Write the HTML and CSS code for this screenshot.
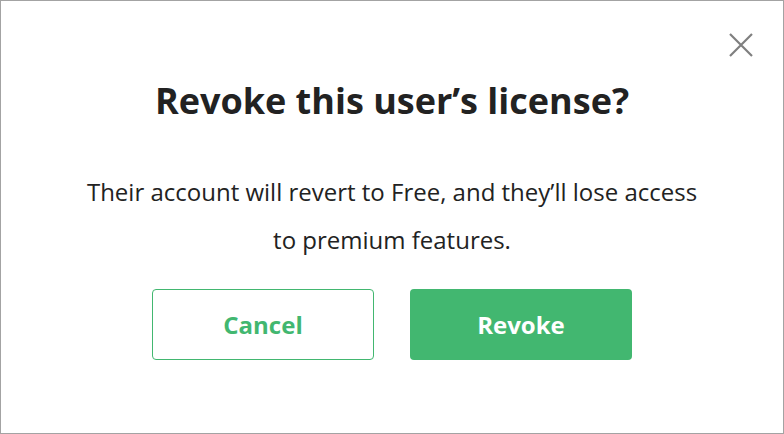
FILE: index.html
```html
<!DOCTYPE html>
<html>
<head>
    <meta charset="UTF-8">
    <title>Revoke license</title>
    <link rel="stylesheet" href="styles.css">
</head>
<body>
    <div class="modal">
        <!-- Close button in the top right corner -->
        <button class="close-button" aria-label="Close">
            <svg width="26" height="26" viewBox="0 0 26 26">
                <path d="M2 2 L24 24 M24 2 L2 24" stroke="#7f7f7f" stroke-width="2.2" fill="none"/>
            </svg>
        </button>
        <h1 class="modal-title">Revoke this user’s license?</h1>
        <p class="modal-text">Their account will revert to Free, and they’ll lose access<br>to premium features.</p>
        <div class="modal-actions">
            <button class="btn btn-outline">Cancel</button>
            <button class="btn btn-primary">Revoke</button>
        </div>
    </div>
</body>
</html>
```

FILE: styles.css
```css
html, body {
    margin: 0;
    padding: 0;
}
body {
    font-family: "Open Sans", Arial, sans-serif;
    background-color: #fff;
    color: #222;
}
.modal {
    position: relative;
    box-sizing: border-box;
    width: 784px;
    height: 434px;
    border: 1px solid #a3a3a3;
    padding-top: 74px;
    text-align: center;
}
.close-button {
    position: absolute;
    top: 31px;
    right: 29px;
    padding: 0;
    border: none;
    background: none;
    cursor: pointer;
    line-height: 0;
}
.modal-title {
    margin: 0;
    font-size: 36px;
    font-weight: 700;
    line-height: 52px;
    color: #222;
}
.modal-text {
    margin: 41px 0 0;
    font-size: 24px;
    line-height: 48px;
    color: #222;
}
.modal-actions {
    display: flex;
    justify-content: center;
    gap: 36px;
    margin-top: 25px;
}
.btn {
    box-sizing: border-box;
    width: 222px;
    height: 71px;
    border-radius: 4px;
    font-family: "Open Sans", Arial, sans-serif;
    font-size: 24px;
    font-weight: 700;
    cursor: pointer;
}
.btn-outline {
    background-color: #fff;
    border: 1px solid #42b770;
    color: #42b770;
}
.btn-primary {
    background-color: #42b770;
    border: none;
    color: #fff;
}
```
